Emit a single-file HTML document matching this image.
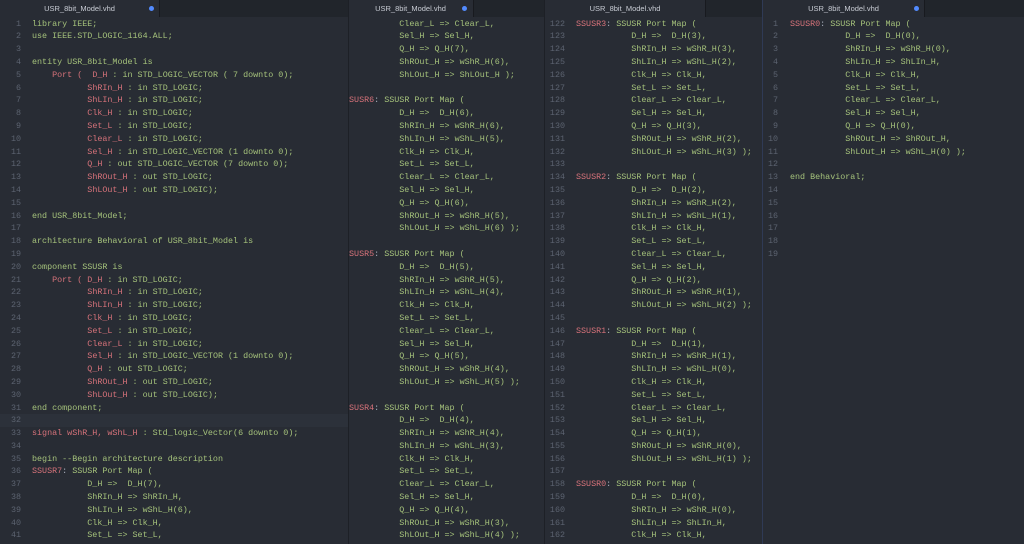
<!DOCTYPE html>
<html><head><meta charset="utf-8"><style>
*{margin:0;padding:0;box-sizing:border-box}
body{width:1024px;height:544px;overflow:hidden;background:#282c34;font-family:"Liberation Mono",monospace;position:relative}
.pane{position:absolute;top:0;height:544px;overflow:hidden;background:#282c34;border-left:1px solid #1d2026}
.tabs{position:absolute;left:0;top:0;right:0;height:17px;background:#21252b}
.tab{position:absolute;top:0;height:17px;background:#282c34;color:#c8ccd4;font:7.5px "Liberation Sans",sans-serif;line-height:17px;text-align:center;border-right:1px solid #181a1f}
.dot{position:absolute;top:6px;width:5px;height:5px;border-radius:50%;background:#528bff}
.gut{position:absolute;top:17.6px;text-align:right;color:#5c6370;font-size:8.4px;line-height:12.8px;white-space:pre}
.code{position:absolute;top:17.6px;color:#a5c27b;font-size:8.4px;line-height:12.8px;white-space:pre}
.r{color:#d6727a}.w{color:#abb2bf}
.hl{position:absolute;left:0;right:0;height:12.8px;background:#2c313a}
</style></head><body>

<div class="pane" style="left:0;width:348px;border-left:none">
<div class="tabs"><div class="tab" style="left:0;width:160px">USR_8bit_Model.vhd<div class="dot" style="left:149px"></div></div></div>
<div class="hl" style="top:414.4px"></div>
<div class="gut" style="left:0;width:21px">1
2
3
4
5
6
7
8
9
10
11
12
13
14
15
16
17
18
19
20
21
22
23
24
25
26
27
28
29
30
31
32
33
34
35
36
37
38
39
40
41</div>
<div class="code" style="left:32px">library IEEE;
use IEEE.STD_LOGIC_1164.ALL;

entity USR_8bit_Model is
    <span class="r">Port (</span>  <span class="r">D_H</span> : in STD_LOGIC_VECTOR ( 7 downto 0);
           <span class="r">ShRIn_H</span> : in STD_LOGIC;
           <span class="r">ShLIn_H</span> : in STD_LOGIC;
           <span class="r">Clk_H</span> : in STD_LOGIC;
           <span class="r">Set_L</span> : in STD_LOGIC;
           <span class="r">Clear_L</span> : in STD_LOGIC;
           <span class="r">Sel_H</span> : in STD_LOGIC_VECTOR (1 downto 0);
           <span class="r">Q_H</span> : out STD_LOGIC_VECTOR (7 downto 0);
           <span class="r">ShROut_H</span> : out STD_LOGIC;
           <span class="r">ShLOut_H</span> : out STD_LOGIC);

end USR_8bit_Model;

architecture Behavioral of USR_8bit_Model is

component SSUSR is
    <span class="r">Port (</span> <span class="r">D_H</span> : in STD_LOGIC;
           <span class="r">ShRIn_H</span> : in STD_LOGIC;
           <span class="r">ShLIn_H</span> : in STD_LOGIC;
           <span class="r">Clk_H</span> : in STD_LOGIC;
           <span class="r">Set_L</span> : in STD_LOGIC;
           <span class="r">Clear_L</span> : in STD_LOGIC;
           <span class="r">Sel_H</span> : in STD_LOGIC_VECTOR (1 downto 0);
           <span class="r">Q_H</span> : out STD_LOGIC;
           <span class="r">ShROut_H</span> : out STD_LOGIC;
           <span class="r">ShLOut_H</span> : out STD_LOGIC);
end component;

<span class="r">signal wShR_H, wShL_H</span> : Std_logic_Vector(6 downto 0);

begin --Begin architecture description
<span class="r">SSUSR7</span><span class="w">:</span> SSUSR Port Map (
           D_H =>  D_H(7),
           ShRIn_H => ShRIn_H,
           ShLIn_H => wShL_H(6),
           Clk_H => Clk_H,
           Set_L => Set_L,</div>
</div>

<div class="pane" style="left:348px;width:196px">
<div class="tabs"><div class="tab" style="left:-1px;width:126px">USR_8bit_Model.vhd<div class="dot" style="left:114px"></div></div></div>
<div class="code" style="left:-5px">           Clear_L => Clear_L,
           Sel_H => Sel_H,
           Q_H => Q_H(7),
           ShROut_H => wShR_H(6),
           ShLOut_H => ShLOut_H );

<span class="r">SSUSR6</span><span class="w">:</span> SSUSR Port Map (
           D_H =>  D_H(6),
           ShRIn_H => wShR_H(6),
           ShLIn_H => wShL_H(5),
           Clk_H => Clk_H,
           Set_L => Set_L,
           Clear_L => Clear_L,
           Sel_H => Sel_H,
           Q_H => Q_H(6),
           ShROut_H => wShR_H(5),
           ShLOut_H => wShL_H(6) );

<span class="r">SSUSR5</span><span class="w">:</span> SSUSR Port Map (
           D_H =>  D_H(5),
           ShRIn_H => wShR_H(5),
           ShLIn_H => wShL_H(4),
           Clk_H => Clk_H,
           Set_L => Set_L,
           Clear_L => Clear_L,
           Sel_H => Sel_H,
           Q_H => Q_H(5),
           ShROut_H => wShR_H(4),
           ShLOut_H => wShL_H(5) );

<span class="r">SSUSR4</span><span class="w">:</span> SSUSR Port Map (
           D_H =>  D_H(4),
           ShRIn_H => wShR_H(4),
           ShLIn_H => wShL_H(3),
           Clk_H => Clk_H,
           Set_L => Set_L,
           Clear_L => Clear_L,
           Sel_H => Sel_H,
           Q_H => Q_H(4),
           ShROut_H => wShR_H(3),
           ShLOut_H => wShL_H(4) );</div>
</div>

<div class="pane" style="left:544px;width:218px">
<div class="tabs"><div class="tab" style="left:0;width:161px">USR_8bit_Model.vhd</div></div>
<div class="gut" style="left:0;width:20px">122
123
124
125
126
127
128
129
130
131
132
133
134
135
136
137
138
139
140
141
142
143
144
145
146
147
148
149
150
151
152
153
154
155
156
157
158
159
160
161
162</div>
<div class="code" style="left:31px"><span class="r">SSUSR3</span><span class="w">:</span> SSUSR Port Map (
           D_H =>  D_H(3),
           ShRIn_H => wShR_H(3),
           ShLIn_H => wShL_H(2),
           Clk_H => Clk_H,
           Set_L => Set_L,
           Clear_L => Clear_L,
           Sel_H => Sel_H,
           Q_H => Q_H(3),
           ShROut_H => wShR_H(2),
           ShLOut_H => wShL_H(3) );

<span class="r">SSUSR2</span><span class="w">:</span> SSUSR Port Map (
           D_H =>  D_H(2),
           ShRIn_H => wShR_H(2),
           ShLIn_H => wShL_H(1),
           Clk_H => Clk_H,
           Set_L => Set_L,
           Clear_L => Clear_L,
           Sel_H => Sel_H,
           Q_H => Q_H(2),
           ShROut_H => wShR_H(1),
           ShLOut_H => wShL_H(2) );

<span class="r">SSUSR1</span><span class="w">:</span> SSUSR Port Map (
           D_H =>  D_H(1),
           ShRIn_H => wShR_H(1),
           ShLIn_H => wShL_H(0),
           Clk_H => Clk_H,
           Set_L => Set_L,
           Clear_L => Clear_L,
           Sel_H => Sel_H,
           Q_H => Q_H(1),
           ShROut_H => wShR_H(0),
           ShLOut_H => wShL_H(1) );

<span class="r">SSUSR0</span><span class="w">:</span> SSUSR Port Map (
           D_H =>  D_H(0),
           ShRIn_H => wShR_H(0),
           ShLIn_H => ShLIn_H,
           Clk_H => Clk_H,</div>
</div>

<div class="pane" style="left:762px;width:262px;border-left:1px solid #2f3a55">
<div class="tabs"><div class="tab" style="left:0;width:162px">USR_8bit_Model.vhd<div class="dot" style="left:151px"></div></div></div>
<div class="gut" style="left:0;width:15px">1
2
3
4
5
6
7
8
9
10
11
12
13
14
15
16
17
18
19</div>
<div class="code" style="left:27px"><span class="r">SSUSR0</span><span class="w">:</span> SSUSR Port Map (
           D_H =>  D_H(0),
           ShRIn_H => wShR_H(0),
           ShLIn_H => ShLIn_H,
           Clk_H => Clk_H,
           Set_L => Set_L,
           Clear_L => Clear_L,
           Sel_H => Sel_H,
           Q_H => Q_H(0),
           ShROut_H => ShROut_H,
           ShLOut_H => wShL_H(0) );

end Behavioral;</div>
</div>
</body></html>
